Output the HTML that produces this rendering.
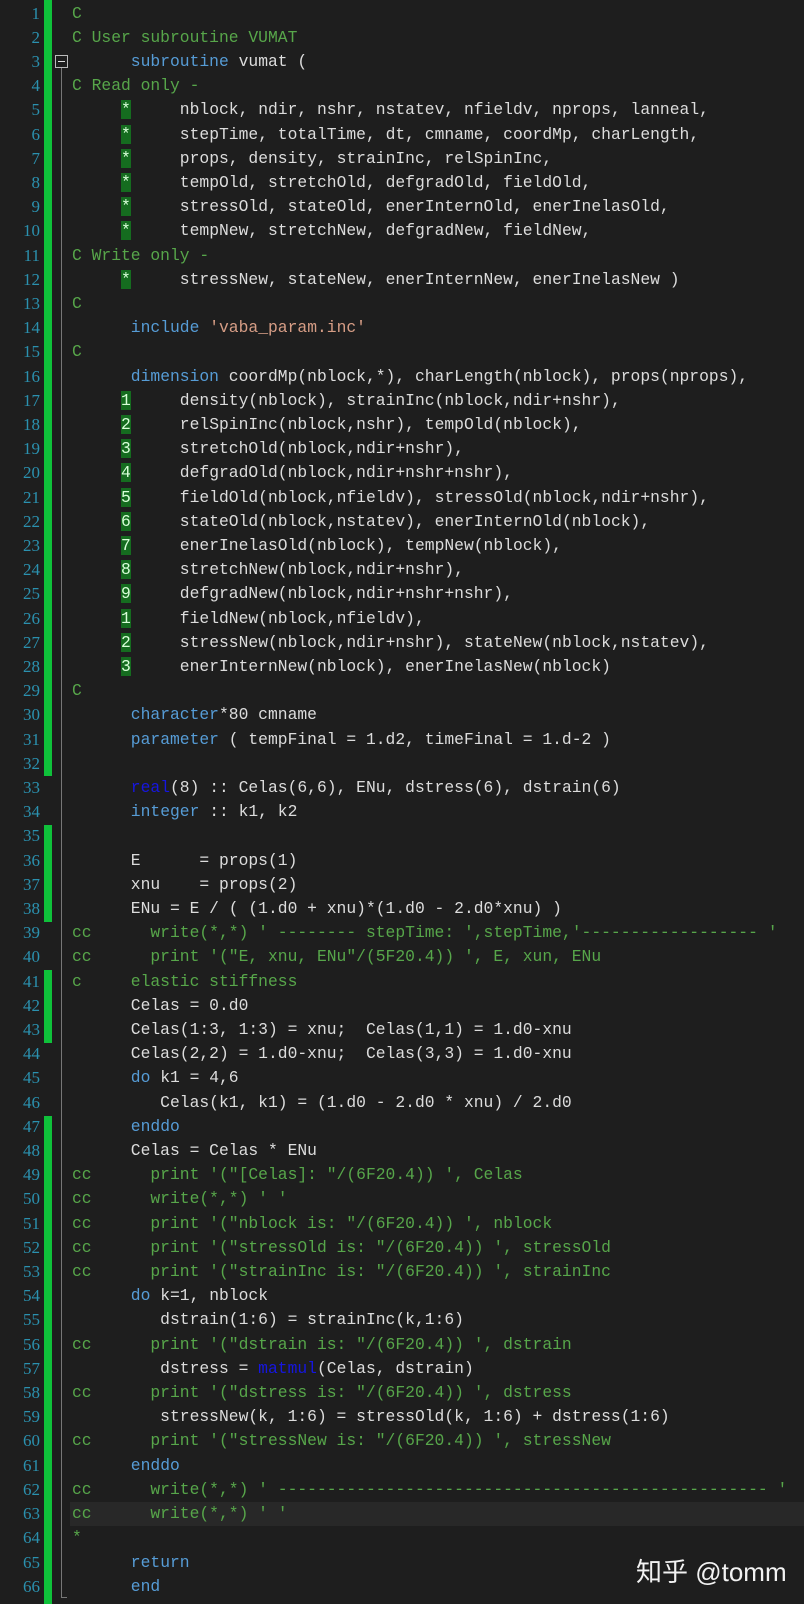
<!DOCTYPE html>
<html><head><meta charset="utf-8"><style>
html,body{margin:0;padding:0;background:#1e1e1e;width:804px;height:1604px;overflow:hidden}
#w{position:relative;width:804px;height:1604px}
.ln{position:absolute;left:0;width:40px;text-align:right;color:#2b91af;font:17px/24.2px "Liberation Serif",serif}
.bar{position:absolute;left:44px;width:8px;background:#0fc13a}
pre{position:absolute;left:72px;top:1.5px;margin:0;font:16.33px/24.2px "Liberation Mono",monospace;color:#dcdcdc;white-space:pre}
.k{color:#569cd6}.c{color:#57a64a}.s{color:#d69d85}.d{color:#1616e0}
.m{background:#156c1f;color:#d8ffd8}
#hl{position:absolute;left:70px;right:0;height:24px;background:#282828}
#wm{position:absolute;left:636px;top:1552px;color:#f2f2f2;font:26px "Liberation Sans","Noto Sans CJK SC",sans-serif}
</style></head><body><div id="w">
<div id="hl" style="top:1502px"></div>
<div class="bar" style="top:0;height:776px"></div>
<div class="bar" style="top:825px;height:97px"></div>
<div class="bar" style="top:970px;height:73px"></div>
<div class="bar" style="top:1116px;height:488px"></div>
<div style="position:absolute;left:55px;top:55px;width:11px;height:11px;border:1px solid #bbb"></div>
<div style="position:absolute;left:58px;top:61px;width:7px;height:1px;background:#ddd"></div>
<div style="position:absolute;left:61px;top:68px;width:1px;height:1530px;background:#777"></div>
<div style="position:absolute;left:61px;top:1597px;width:6px;height:1px;background:#777"></div>
<div id="lns"></div>
<pre><span class="c">C</span>
<span class="c">C User subroutine VUMAT</span>
      <span class="k">subroutine</span> vumat (
<span class="c">C Read only -</span>
     <span class="m">*</span>     nblock, ndir, nshr, nstatev, nfieldv, nprops, lanneal,
     <span class="m">*</span>     stepTime, totalTime, dt, cmname, coordMp, charLength,
     <span class="m">*</span>     props, density, strainInc, relSpinInc,
     <span class="m">*</span>     tempOld, stretchOld, defgradOld, fieldOld,
     <span class="m">*</span>     stressOld, stateOld, enerInternOld, enerInelasOld,
     <span class="m">*</span>     tempNew, stretchNew, defgradNew, fieldNew,
<span class="c">C Write only -</span>
     <span class="m">*</span>     stressNew, stateNew, enerInternNew, enerInelasNew )
<span class="c">C</span>
      <span class="k">include</span> <span class="s">'vaba_param.inc'</span>
<span class="c">C</span>
      <span class="k">dimension</span> coordMp(nblock,*), charLength(nblock), props(nprops),
     <span class="m">1</span>     density(nblock), strainInc(nblock,ndir+nshr),
     <span class="m">2</span>     relSpinInc(nblock,nshr), tempOld(nblock),
     <span class="m">3</span>     stretchOld(nblock,ndir+nshr),
     <span class="m">4</span>     defgradOld(nblock,ndir+nshr+nshr),
     <span class="m">5</span>     fieldOld(nblock,nfieldv), stressOld(nblock,ndir+nshr),
     <span class="m">6</span>     stateOld(nblock,nstatev), enerInternOld(nblock),
     <span class="m">7</span>     enerInelasOld(nblock), tempNew(nblock),
     <span class="m">8</span>     stretchNew(nblock,ndir+nshr),
     <span class="m">9</span>     defgradNew(nblock,ndir+nshr+nshr),
     <span class="m">1</span>     fieldNew(nblock,nfieldv),
     <span class="m">2</span>     stressNew(nblock,ndir+nshr), stateNew(nblock,nstatev),
     <span class="m">3</span>     enerInternNew(nblock), enerInelasNew(nblock)
<span class="c">C</span>
      <span class="k">character</span>*80 cmname
      <span class="k">parameter</span> ( tempFinal = 1.d2, timeFinal = 1.d-2 )

      <span class="d">real</span>(8) :: Celas(6,6), ENu, dstress(6), dstrain(6)
      <span class="k">integer</span> :: k1, k2

      E      = props(1)
      xnu    = props(2)
      ENu = E / ( (1.d0 + xnu)*(1.d0 - 2.d0*xnu) )
<span class="c">cc      write(*,*) ' -------- stepTime: ',stepTime,'------------------ '</span>
<span class="c">cc      print '("E, xnu, ENu"/(5F20.4)) ', E, xun, ENu</span>
<span class="c">c     elastic stiffness</span>
      Celas = 0.d0
      Celas(1:3, 1:3) = xnu;  Celas(1,1) = 1.d0-xnu
      Celas(2,2) = 1.d0-xnu;  Celas(3,3) = 1.d0-xnu
      <span class="k">do</span> k1 = 4,6
         Celas(k1, k1) = (1.d0 - 2.d0 * xnu) / 2.d0
      <span class="k">enddo</span>
      Celas = Celas * ENu
<span class="c">cc      print '("[Celas]: "/(6F20.4)) ', Celas</span>
<span class="c">cc      write(*,*) ' '</span>
<span class="c">cc      print '("nblock is: "/(6F20.4)) ', nblock</span>
<span class="c">cc      print '("stressOld is: "/(6F20.4)) ', stressOld</span>
<span class="c">cc      print '("strainInc is: "/(6F20.4)) ', strainInc</span>
      <span class="k">do</span> k=1, nblock
         dstrain(1:6) = strainInc(k,1:6)
<span class="c">cc      print '("dstrain is: "/(6F20.4)) ', dstrain</span>
         dstress = <span class="d">matmul</span>(Celas, dstrain)
<span class="c">cc      print '("dstress is: "/(6F20.4)) ', dstress</span>
         stressNew(k, 1:6) = stressOld(k, 1:6) + dstress(1:6)
<span class="c">cc      print '("stressNew is: "/(6F20.4)) ', stressNew</span>
      <span class="k">enddo</span>
<span class="c">cc      write(*,*) ' -------------------------------------------------- '</span>
<span class="c">cc      write(*,*) ' '</span>
<span class="c">*</span>
      <span class="k">return</span>
      <span class="k">end</span></pre>
<div id="wm">知乎 @tomm</div>
<div class="ln" style="top:1.5px">1<br>2<br>3<br>4<br>5<br>6<br>7<br>8<br>9<br>10<br>11<br>12<br>13<br>14<br>15<br>16<br>17<br>18<br>19<br>20<br>21<br>22<br>23<br>24<br>25<br>26<br>27<br>28<br>29<br>30<br>31<br>32<br>33<br>34<br>35<br>36<br>37<br>38<br>39<br>40<br>41<br>42<br>43<br>44<br>45<br>46<br>47<br>48<br>49<br>50<br>51<br>52<br>53<br>54<br>55<br>56<br>57<br>58<br>59<br>60<br>61<br>62<br>63<br>64<br>65<br>66</div>
</div></body></html>
